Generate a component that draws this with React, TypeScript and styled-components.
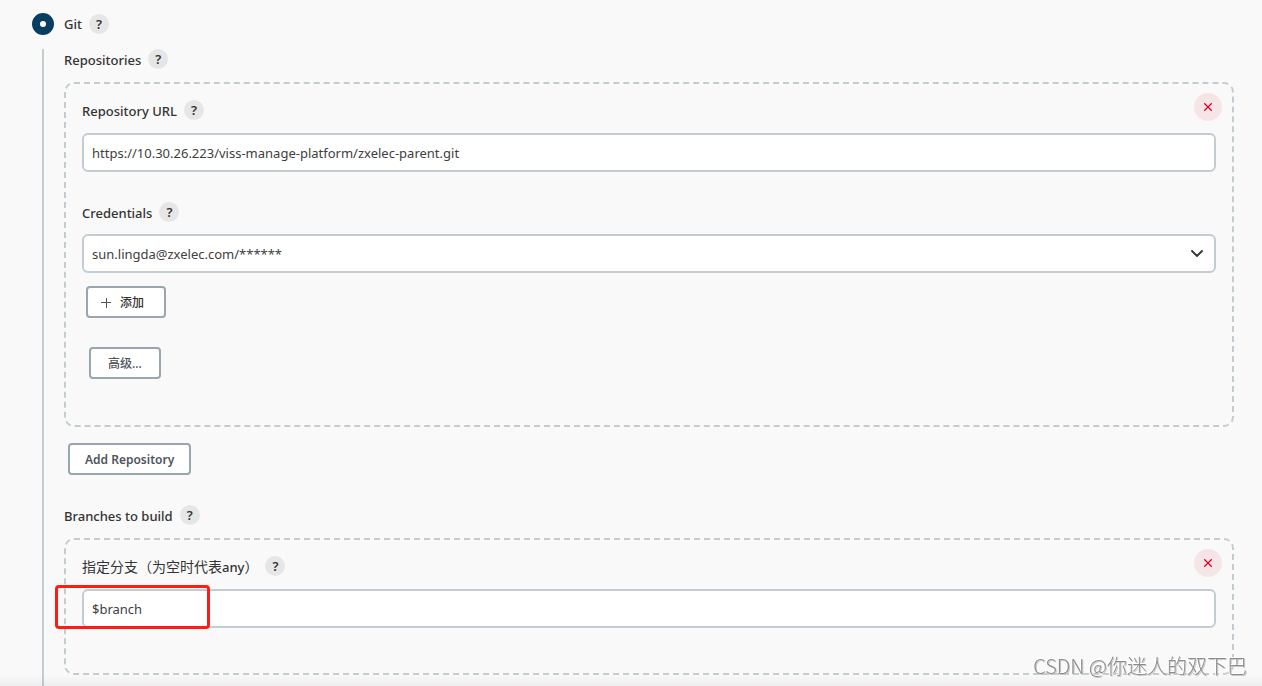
import React, { useState } from "react";
import styled, { createGlobalStyle, css } from "styled-components";

const line = "#c3cdd1";
const text = "#333333";

const GlobalStyle = createGlobalStyle`
  *, *::before, *::after { box-sizing: border-box; }
  body {
    margin: 0;
    background: #f9f9f9;
    color: ${text};
    font: 400 13px/20px "Noto Sans", "Noto Sans CJK SC", sans-serif;
  }
  button, input, select { font: inherit; color: inherit; margin: 0; }
`;

const Page = styled.main`
  display: flex;
  flex-direction: column;
  height: 100vh;
  overflow: hidden;
  padding: 13px 28px 0 32px;
`;

const RadioRow = styled.div`
  display: flex;
  align-items: center;
  flex: none;
  height: 22px;
`;

const Radio = styled.input`
  appearance: none;
  width: 22px;
  height: 22px;
  border-radius: 50%;
  background: #fff;
  border: 2px solid ${line};
  &:checked { border: 8px solid #073f63; }
`;

const RadioLabel = styled.label`
  margin-left: 10px;
  font-weight: 500;
`;

const Nested = styled.section`
  flex: 1 0 auto;
  margin: 14px 0 0 10px;
  padding-left: 20px;
  border-left: 2px solid ${line};
`;

const LabelRow = styled.div<{ $gap?: number }>`
  display: flex;
  align-items: center;
  height: 20px;
  margin-bottom: ${(p) => p.$gap ?? 13}px;
`;

const labelText = css`
  padding-top: 2px;
  font-weight: 500;
`;

const Label = styled.label`${labelText}`;
const Heading = styled.span`${labelText}`;
const LocalLabel = styled(Label)`
  font-size: 14px;
  font-weight: 400;
`;

const Keyword = styled.span`
  font-size: 13px;
  font-weight: 500;
`;

const HelpButton = styled.button`
  width: 20px;
  height: 20px;
  margin-left: 7px;
  padding: 0;
  border: 0;
  border-radius: 50%;
  background: #e6e6e6;
  font-size: 13px;
  font-weight: 600;
  line-height: 20px;
  text-align: center;
`;

const Group = styled.div<{ $bottom: number }>`
  position: relative;
  padding: 16px 16px ${(p) => p.$bottom}px;
  border: 2px dashed ${line};
  border-radius: 10px;
`;

const Field = styled.div`
  & + & { margin-top: 30px; }
`;

const Control = styled.div`
  position: relative;
`;

const controlBox = css`
  display: block;
  width: 100%;
  height: 39px;
  padding: 0 8px;
  border: 2px solid ${line};
  border-radius: 6px;
  background: #fff;
`;

const TextInput = styled.input`
  ${controlBox}
  && { color: #404040; }
`;
const Select = styled.select`
  ${controlBox}
  appearance: none;
  && { color: #404040; }
`;

const Chevron = styled.svg`
  position: absolute;
  top: 13px;
  right: 13px;
  pointer-events: none;
`;

const RemoveButton = styled.button`
  position: absolute;
  top: 9px;
  right: 10px;
  display: grid;
  place-items: center;
  width: 28px;
  height: 28px;
  padding: 0;
  border: 0;
  border-radius: 50%;
  background: #f6e5e7;
  && { color: #e00024; }
`;

const Actions = styled.div<{ $top: number; $left: number }>`
  display: flex;
  padding: ${(p) => `${p.$top}px 0 0 ${p.$left}px`};
`;

const Button = styled.button`
  display: flex;
  align-items: center;
  gap: 9px;
  height: 32px;
  padding: 2px 15px 0;
  border: 2px solid #98a6ae;
  border-radius: 4px;
  background: #fff;
  color: #4d545d;
  font-size: 12px;
  font-weight: 600;
`;

const AddButton = styled(Button)`
  padding: 1px 20px 0 13px;
  color: ${text};
  font-weight: 500;
`;

const AdvancedButton = styled(Button)`
  padding: 2px 17px 0;
  font-weight: 500;
`;

const Highlight = styled.div`
  position: absolute;
  top: -4px;
  left: -27px;
  width: 155px;
  height: 44px;
  border: 3px solid #ff1c12;
  border-radius: 4px;
  pointer-events: none;
`;

const BottomShade = styled.div`
  position: fixed;
  inset: auto 0 0 0;
  height: 12px;
  background: linear-gradient(rgba(0, 0, 0, 0), rgba(0, 0, 0, 0.04));
  pointer-events: none;
`;

const Watermark = styled.div`
  position: fixed;
  right: 15px;
  bottom: 6px;
  color: #8c8c8c;
  font: 300 20px/28px "Noto Sans CJK SC", sans-serif;
  text-shadow: -1px -1px 0 #fff, 1px 1px 0 #c8c8c8;
  white-space: nowrap;
`;

const Help = ({ topic }: { topic: string }) => (
  <HelpButton type="button" aria-label={`Help for ${topic}`}>?</HelpButton>
);

const Remove = () => (
  <RemoveButton type="button" aria-label="Remove">
    <svg width="8" height="8" viewBox="0 0 8 8" fill="none" stroke="currentColor" strokeWidth="1.3">
      <path d="M0.2 0.2 7.8 7.8M7.8 0.2 0.2 7.8" />
    </svg>
  </RemoveButton>
);

export default function App() {
  const [url, setUrl] = useState("https://10.30.26.223/viss-manage-platform/zxelec-parent.git");
  const [branch, setBranch] = useState("$branch");

  return (
    <>
      <GlobalStyle />
      <Page>
        <RadioRow>
          <Radio type="radio" id="scm-git" name="scm" defaultChecked />
          <RadioLabel htmlFor="scm-git">Git</RadioLabel>
          <Help topic="Git" />
        </RadioRow>
        <Nested>
          <LabelRow>
            <Heading>Repositories</Heading>
            <Help topic="Repositories" />
          </LabelRow>
          <Group $bottom={46}>
            <Remove />
            <Field>
              <LabelRow>
                <Label htmlFor="url">Repository URL</Label>
                <Help topic="Repository URL" />
              </LabelRow>
              <TextInput id="url" value={url} onChange={(e) => setUrl(e.target.value)} />
            </Field>
            <Field>
              <LabelRow $gap={12}>
                <Label htmlFor="credentials">Credentials</Label>
                <Help topic="Credentials" />
              </LabelRow>
              <Control>
                <Select id="credentials">
                  <option>sun.lingda@zxelec.com/******</option>
                </Select>
                <Chevron width="12" height="12" viewBox="0 0 12 12" fill="none" stroke={text} strokeWidth="1.8" strokeLinecap="round" strokeLinejoin="round">
                  <path d="M1 4 6 9 11 4" />
                </Chevron>
              </Control>
            </Field>
            <Actions $top={13} $left={4}>
              <AddButton type="button">
                <svg width="10" height="10" viewBox="0 0 10 10" stroke="#555" strokeWidth="1">
                  <path d="M5.5 0V10M0 4.5H10" />
                </svg>
                添加
              </AddButton>
            </Actions>
            <Actions $top={29} $left={7}>
              <AdvancedButton type="button">高级...</AdvancedButton>
            </Actions>
          </Group>
          <Actions $top={16} $left={4}>
            <Button type="button">Add Repository</Button>
          </Actions>
          <Actions $top={30} $left={0}>
            <LabelRow>
              <Heading>Branches to build</Heading>
              <Help topic="Branches to build" />
            </LabelRow>
          </Actions>
          <Group $bottom={45}>
            <Remove />
            <LabelRow>
              <LocalLabel htmlFor="branch">
                指定分支（为空时代表<Keyword>any</Keyword>）
              </LocalLabel>
              <Help topic="branch specifier" />
            </LabelRow>
            <Control>
              <TextInput id="branch" value={branch} onChange={(e) => setBranch(e.target.value)} />
              <Highlight />
            </Control>
          </Group>
        </Nested>
      </Page>
      <BottomShade />
      <Watermark>CSDN @你迷人的双下巴</Watermark>
    </>
  );
}
